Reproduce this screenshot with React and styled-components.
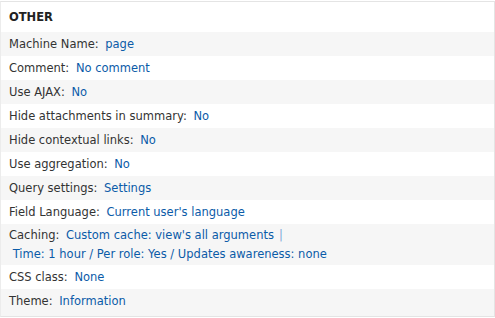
import React from "react";
import styled, { createGlobalStyle } from "styled-components";

const GlobalStyle = createGlobalStyle`
  html, body {
    margin: 0;
    padding: 0;
    background: #fff;
  }
  body {
    font-family: "DejaVu Sans", "Liberation Sans", sans-serif;
    font-size: 11.5px;
    color: #333;
  }
`;

const Panel = styled.section`
  margin-top: 1px;
  width: 495px;
  height: 316px;
  box-sizing: border-box;
  border: 1px solid #e4e4e4;
  border-left-color: #ececec;
  background: #fff;
  display: flex;
  flex-direction: column;
`;

const Title = styled.h3`
  margin: 0;
  height: 30px;
  flex: none;
  padding: 0 8px;
  display: flex;
  align-items: center;
  font-size: 11.5px;
  font-weight: bold;
  color: #222;
  text-transform: uppercase;
`;

const List = styled.ul`
  list-style: none;
  margin: 0;
  padding: 0;
  flex: 1;
  display: flex;
  flex-direction: column;
`;

const Row = styled.li`
  padding: ${(p) => (p.$tall ? "2px 8px 1px" : "3px 8px")};
  line-height: ${(p) => (p.$tall ? "19px" : "18px")};
  background: ${(p) => (p.$odd ? "#f6f6f6" : "#fff")};
  &:last-child {
    flex: 1;
  }
`;

const Label = styled.span`
  color: #333;
  margin-right: 3px;
`;

const Value = styled.a`
  color: #0b5ba8;
  text-decoration: none;
`;

const Sep = styled.span`
  color: #7ea8d8;
  margin-left: 5px;
`;

const items = [
  ["Machine Name:", "page"],
  ["Comment:", "No comment"],
  ["Use AJAX:", "No"],
  ["Hide attachments in summary:", "No"],
  ["Hide contextual links:", "No"],
  ["Use aggregation:", "No"],
  ["Query settings:", "Settings"],
  ["Field Language:", "Current user's language"],
];

export default function App() {
  return (
    <>
      <GlobalStyle />
      <Panel>
        <Title>Other</Title>
        <List>
          {items.map(([label, value], i) => (
            <Row key={label} $odd={i % 2 === 0}>
              <Label>{label}</Label> <Value href="#">{value}</Value>
            </Row>
          ))}
          <Row $odd $tall>
            <Label>Caching:</Label> <Value href="#">Custom cache: view's all arguments</Value>
            <Sep>|</Sep>
            <br />
            <Value href="#">&nbsp;Time: 1 hour / Per role: Yes / Updates awareness: none</Value>
          </Row>
          <Row>
            <Label>CSS class:</Label> <Value href="#">None</Value>
          </Row>
          <Row $odd>
            <Label>Theme:</Label> <Value href="#">Information</Value>
          </Row>
        </List>
      </Panel>
    </>
  );
}
